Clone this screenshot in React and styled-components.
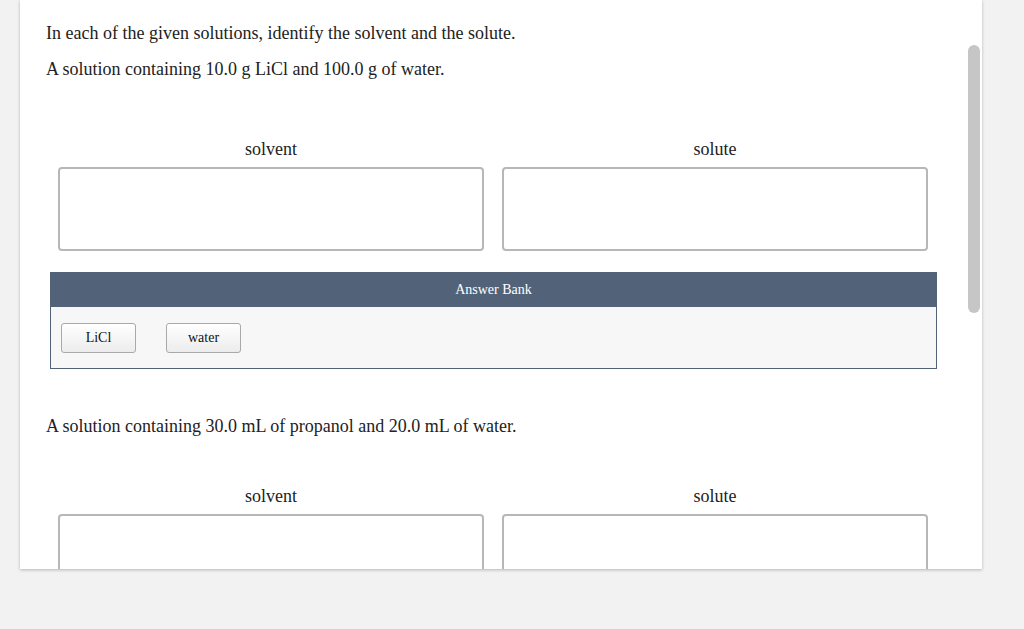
import React from "react";
import styled, { createGlobalStyle } from "styled-components";

const GlobalStyle = createGlobalStyle`
  html, body {
    margin: 0;
    padding: 0;
    background: #f2f2f2;
    font-family: "Liberation Serif", "Times New Roman", serif;
    color: #222;
  }
`;

const questions = [
  { id: 1, text: "A solution containing 10.0 g LiCl and 100.0 g of water.", gap: 60, bank: ["LiCl", "water"] },
  { id: 2, text: "A solution containing 30.0 mL of propanol and 20.0 mL of water.", gap: 50 },
];

export default function App() {
  return (
    <Page>
      <GlobalStyle />
      <Card>
        <Content>
          <Intro>In each of the given solutions, identify the solvent and the solute.</Intro>
          {questions.map((q, i) => (
            <Question key={q.id} first={i === 0}>
              <Prompt>{q.text}</Prompt>
              <Targets gap={q.gap}>
                <Target>
                  <Label>solvent</Label>
                  <DropBox />
                </Target>
                <Target>
                  <Label>solute</Label>
                  <DropBox />
                </Target>
              </Targets>
              {q.bank && (
                <Bank>
                  <BankHeader>Answer Bank</BankHeader>
                  <BankBody>
                    {q.bank.map((b) => (
                      <Chip key={b}>{b}</Chip>
                    ))}
                  </BankBody>
                </Bank>
              )}
            </Question>
          ))}
        </Content>
        <ScrollThumb />
      </Card>
    </Page>
  );
}

const Page = styled.div`
  width: 1024px;
  height: 629px;
  overflow: hidden;
`;

const Card = styled.div`
  position: relative;
  margin-left: 20px;
  width: 962px;
  height: 569px;
  background: #fff;
  box-shadow: 0 1px 3px rgba(0, 0, 0, 0.25);
  overflow: hidden;
`;

const Content = styled.div`
  padding: 23px 0 0 26px;
  width: 920px;
`;

const Intro = styled.p`
  margin: 0;
  font-size: 18px;
  line-height: 20px;
`;

const Question = styled.div`
  margin-top: ${(p) => (p.first ? "16px" : "47px")};
`;

const Prompt = styled.p`
  margin: 0;
  font-size: 18px;
  line-height: 20px;
`;

const Targets = styled.div`
  display: grid;
  grid-template-columns: 426px 426px;
  column-gap: 18px;
  margin: ${(p) => p.gap}px 0 0 12px;
`;

const Target = styled.div`
  display: flex;
  flex-direction: column;
  align-items: center;
`;

const Label = styled.div`
  font-size: 18px;
  line-height: 20px;
  margin-bottom: 8px;
`;

const DropBox = styled.div`
  box-sizing: border-box;
  width: 426px;
  height: 84px;
  border: 2px solid #b7b7b7;
  border-radius: 4px;
  background: #fff;
`;

const Bank = styled.div`
  margin: 21px 0 0 4px;
  width: 887px;
`;

const BankHeader = styled.div`
  height: 35px;
  background: #526379;
  color: #fff;
  font-size: 14px;
  display: flex;
  align-items: center;
  justify-content: center;
`;

const BankBody = styled.div`
  box-sizing: border-box;
  height: 62px;
  background: #f7f7f7;
  border: 1px solid #526379;
  border-top: none;
  display: flex;
  gap: 30px;
  padding: 16px 10px;
  align-items: flex-start;
`;

const Chip = styled.div`
  box-sizing: border-box;
  width: 75px;
  height: 30px;
  border: 1px solid #a9a9a9;
  border-radius: 3px;
  background: linear-gradient(#ffffff, #ececec);
  font-size: 14px;
  display: flex;
  align-items: center;
  justify-content: center;
  color: #111;
`;

const ScrollThumb = styled.div`
  position: absolute;
  top: 45px;
  left: 948px;
  width: 12px;
  height: 268px;
  border-radius: 6px;
  background: #c6c6c6;
`;
